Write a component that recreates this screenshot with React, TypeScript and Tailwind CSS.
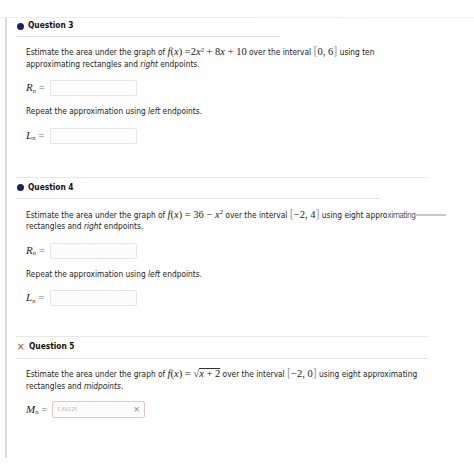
import React from 'react';

const sans = { fontFamily: '"DejaVu Sans Condensed", "DejaVu Sans", sans-serif' };
const serif = { fontFamily: '"Liberation Serif", "DejaVu Serif", serif' };

function M({ children }: { children: React.ReactNode }) {
  return (
    <span className="italic text-[10.5px] text-[#222]" style={serif}>
      {children}
    </span>
  );
}

function N({ children }: { children: React.ReactNode }) {
  return (
    <span className="text-[10.5px] text-[#222]" style={serif}>
      {children}
    </span>
  );
}

function Bracket({ children }: { children: React.ReactNode }) {
  return <span className="text-[12px] text-[#999]" style={serif}>{children}</span>;
}

function Header({ title, wrong = false, line }: { title: string; wrong?: boolean; line: string }) {
  return (
    <div>
      <div className="flex items-center h-[14px] gap-[4px]">
        {wrong ? (
          <span className="w-[8px] text-[10px] leading-none text-[#a23a3a] ml-[1px]">×</span>
        ) : (
          <span className="w-[7px] h-[7px] rounded-full bg-[#1c1f6e] ml-[1px]" />
        )}
        <span className="text-[8.3px] font-semibold text-[#111]">{title}</span>
      </div>
      <div className={`h-px bg-[#e4e4e4] ${line}`} />
    </div>
  );
}

function Answer({ v, width = 'w-[87px]', wrong = false }: { v: string; width?: string; wrong?: boolean }) {
  return (
    <div className="flex items-center">
      <span className="w-[24px] text-[11px] text-[#222] whitespace-nowrap" style={serif}>
        <i>{v}</i>
        <sub className="text-[6.5px] italic">n</sub>
        <span className="text-[#777]"> =</span>
      </span>
      {wrong ? (
        <div className={`h-[17px] ${width} ml-[2px] border border-[#e2c6c6] rounded-[2px] bg-[#fbfbfb] flex items-center justify-between px-[4px]`}>
          <span className="text-[5.5px] text-[#b8b8b8]">1.69125</span>
          <span className="text-[9px] leading-none text-[#c86a6a]">×</span>
        </div>
      ) : (
        <div className={`h-[16px] ${width} border border-[#e6e6e6] rounded-[2px] bg-[#fcfcfc]`} />
      )}
    </div>
  );
}

export default function App() {
  return (
    <div className="w-[474px] h-[474px] bg-white overflow-hidden text-[#222]" style={sans}>
      <div className="h-[17px]" />
      <div className="h-px bg-gradient-to-r from-[#ececec] via-[#ececec] to-[#f6f6f6]" />
      <div className="ml-[5px] border-l-2 border-[#dcdcdc] pl-[9px] h-[440px] text-[8.3px] leading-[11.5px]">
        {/* Question 3 */}
        <div className="pt-px">
          <Header title="Question 3" line="w-[264px] mt-[3px]" />
          <div className="pl-[10px]">
            <p className="mt-[9px]">
              Estimate the area under the graph of <M>f</M><N>(</N><M>x</M><N>) =2</N><M>x</M>
              <sup className="text-[6.5px]" style={serif}>2</sup><N> + 8</N><M>x</M><N> + 10</N> over the interval{' '}
              <Bracket>[</Bracket><N>0, 6</N><Bracket>]</Bracket> using ten
              <br />
              approximating rectangles and <i>right</i> endpoints.
            </p>
            <div className="mt-[10px]">
              <Answer v="R" />
            </div>
            <p className="mt-[10px]">
              Repeat the approximation using <i>left</i> endpoints.
            </p>
            <div className="mt-[10px]">
              <Answer v="L" />
            </div>
          </div>
        </div>

        <div className="mt-[33px] h-px w-[412px] bg-[#e8e8e8]" />

        {/* Question 4 */}
        <div className="mt-[3px]">
          <Header title="Question 4" line="w-[364px] mt-[3px]" />
          <div className="pl-[10px]">
            <p className="mt-[10px] relative">
              Estimate the area under the graph of <M>f</M><N>(</N><M>x</M><N>) = 36 − </N><M>x</M>
              <sup className="text-[6.5px]" style={serif}>2</sup> over the interval{' '}
              <Bracket>[</Bracket><N>−2, 4</N><Bracket>]</Bracket> using eight appro
              <span className="tracking-[-0.6px] text-[#555]">ximating</span>
              <span className="inline-block align-middle ml-[1px] w-[30px] h-[2px] bg-[#c8c8c8]" />
              <br />
              rectangles and <i>right</i> endpoints.
            </p>
            <div className="mt-[10px]">
              <Answer v="R" />
            </div>
            <p className="mt-[10px]">
              Repeat the approximation using <i>left</i> endpoints.
            </p>
            <div className="mt-[10px]">
              <Answer v="L" />
            </div>
          </div>
        </div>

        <div className="mt-[30px] h-px w-[412px] bg-[#e8e8e8]" />

        {/* Question 5 */}
        <div className="mt-[3px]">
          <Header title="Question 5" wrong line="w-[412px] mt-[4px]" />
          <div className="pl-[10px]">
            <p className="mt-[9px]">
              Estimate the area under the graph of <M>f</M><N>(</N><M>x</M><N>) = √</N>
              <span className="border-t border-[#333]"><M>x</M><N> + 2</N></span> over the interval{' '}
              <Bracket>[</Bracket><N>−2, 0</N><Bracket>]</Bracket> using eight approximating
              <br />
              rectangles and <i>midpoints</i>.
            </p>
            <div className="mt-[9px]">
              <Answer v="M" width="w-[93px]" wrong />
            </div>
          </div>
        </div>
      </div>
    </div>
  );
}
